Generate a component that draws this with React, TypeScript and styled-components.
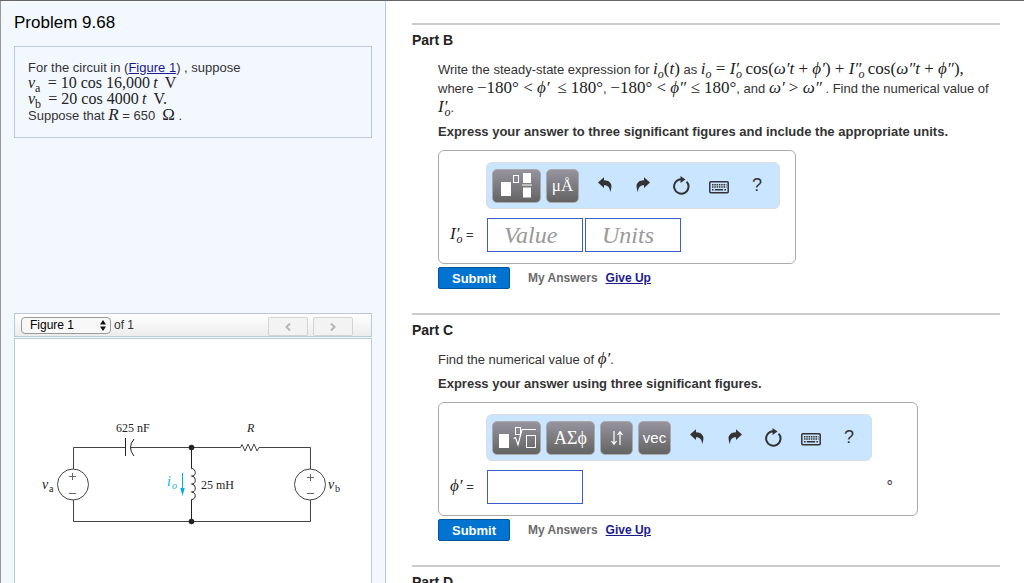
import React from "react";
import styled, { createGlobalStyle } from "styled-components";

const sans = '"Liberation Sans", Arial, sans-serif';
const serif = '"Liberation Serif", "DejaVu Serif", serif';

const GlobalStyle = createGlobalStyle`
  * { box-sizing: border-box; }
  body { margin: 0; background: #fff; color: #333; font: 13px/16px ${sans}; }
  button, input, select { font-family: inherit; margin: 0; }
`;

const Page = styled.div`
  display: flex;
  height: 100vh;
  border-top: 1px solid #666;
`;

const ProblemPane = styled.aside`
  flex: 0 0 386px;
  display: flex;
  flex-direction: column;
  padding: 12px 13px 0;
  background: #f3f8ff;
  border-left: 1px solid #999;
  border-right: 1px solid #b7cbdc;
  overflow: hidden;
`;

const ProblemTitle = styled.h1`
  margin: 0;
  color: #000;
  font-size: 17px;
  font-weight: normal;
  line-height: 20px;
`;

const ProblemText = styled.div`
  margin-top: 13px;
  padding: 13px;
  border: 1px solid #b7cbdc;
`;

const TextLine = styled.p`
  margin: 0;
  height: 16px;
  white-space: nowrap;
`;

const Link = styled.a`
  color: #1a1a8f;
  text-decoration: underline;
`;

const FigureBar = styled.div`
  display: flex;
  align-items: center;
  flex: none;
  height: 24px;
  margin-top: 175px;
  padding: 0 18px 0 6px;
  border: 1px solid #b7cbdc;
  background: linear-gradient(#fff, #ececec);
  color: #333;
  font-size: 12px;
`;

const SelectWrap = styled.label`
  display: flex;
  align-items: center;
  position: relative;
  margin-right: 3px;

  svg { position: absolute; right: 5px; pointer-events: none; }
`;

const FigureSelect = styled.select`
  appearance: none;
  width: 90px;
  height: 17px;
  padding: 0 8px;
  border: 1px solid #999;
  border-radius: 4px;
  background: #f8f8f8;
  color: #000;
  font-size: 12px;
  line-height: 14px;
`;

const Pager = styled.div`
  display: flex;
  gap: 5px;
  margin-left: auto;
  align-self: flex-end;
`;

const PagerButton = styled.button`
  display: flex;
  align-items: center;
  justify-content: center;
  width: 40px;
  height: 19px;
  padding: 0;
  border: 1px solid #d4d4d4;
  border-radius: 2px;
  background: #f3f3f3;
`;

const FigureFrame = styled.div`
  flex: 1;
  margin-top: 1px;
  border: 1px solid #b7cbdc;
  border-bottom: 0;
  background: #fff;
  overflow: hidden;

  svg { display: block; }
`;

const AnswerPane = styled.main`
  flex: 1;
  min-width: 0;
  padding: 22px 24px 0 26px;
  overflow: hidden;
`;

const PartSection = styled.section`
  padding-bottom: 24px;
  border-top: 2px solid #ccc;
`;

const PartTitle = styled.h2`
  margin: 0;
  padding-top: 7px;
  color: #222;
  font-size: 14px;
  line-height: 16px;
`;

const PartBody = styled.div`
  padding: 12px 0 0 26px;
`;

const Statement = styled.p`
  margin: 0;
  line-height: 19px;
  white-space: nowrap;
`;

const Instruction = styled.p`
  margin: 7px 0 10px;
  font-weight: bold;
`;

const Formula = styled.span<{ $upright?: boolean; $small?: boolean }>`
  color: #222;
  font-family: ${serif};
  font-size: ${(p) => (p.$small ? 16 : 17)}px;
  font-style: ${(p) => (p.$upright ? "normal" : "italic")};
  line-height: 0;
  white-space: pre;
`;

const Sub = styled.sub<{ $tuck?: boolean }>`
  margin-left: ${(p) => (p.$tuck ? "-3px" : "0")};
  font-size: 12px;
  line-height: 0;
  vertical-align: -4px;
`;

const Upright = styled.span`
  font-style: normal;
`;

const AnswerBox = styled.div<{ $width: number }>`
  width: ${(p) => p.$width}px;
  height: 114px;
  padding: 11px 15px 0 11px;
  border: 1px solid #aaa;
  border-radius: 6px;
`;

const Toolbar = styled.div`
  display: flex;
  align-items: center;
  gap: 5px;
  width: fit-content;
  height: 47px;
  margin-left: 36px;
  padding: 0 3px 0 5px;
  border: 1px solid #ddd;
  border-radius: 6px;
  background: #cae5ff;
`;

const PaletteButton = styled.button<{ $wide?: boolean; $serif?: boolean; $size?: number }>`
  display: flex;
  align-items: center;
  justify-content: center;
  width: ${(p) => (p.$wide ? 49 : 33)}px;
  height: 34px;
  padding: 0;
  border: 1px solid #aaa;
  border-radius: 5px;
  background: linear-gradient(#96939e, #636363);
  color: #fff;
  font-size: ${(p) => p.$size ?? 15}px;
  line-height: 20px;

  && { font-family: ${(p) => (p.$serif ? serif : sans)}; }
`;

const ToolIcons = styled.div`
  display: flex;
  padding-left: 2px;
`;

const IconButton = styled.button`
  display: flex;
  align-items: center;
  justify-content: center;
  width: 38px;
  height: 34px;
  padding: 0;
  border: 0;
  background: none;
  color: #333;
  font-size: 18px;
`;

const EntryRow = styled.div`
  display: flex;
  align-items: center;
  gap: 2px;
  margin-top: 9px;
`;

const EntryLabel = styled.label`
  width: 35px;
  white-space: nowrap;
`;

const Entry = styled.input`
  width: 96px;
  height: 34px;
  padding: 0 16px;
  border: 1px solid #3a5fcd;
  border-radius: 0;
  background: #fff;
  font-size: 24px;

  && { font-family: ${serif}; }
  &::placeholder { color: #999; font-style: italic; opacity: 1; }
`;

const Degree = styled.span`
  margin-left: auto;
  padding-right: 9px;
  font-size: 16px;
`;

const Actions = styled.div`
  display: flex;
  align-items: center;
  margin-top: 3px;
  font-size: 12px;
  font-weight: bold;
`;

const SubmitButton = styled.button`
  width: 72px;
  height: 22px;
  margin-right: 18px;
  padding: 0;
  border: 1px solid #00549b;
  border-radius: 2px;
  background: #0074d0;
  color: #fff;
  font-size: 13px;
  font-weight: bold;
`;

const MyAnswers = styled.span`
  margin-right: 8px;
  color: #6b6b6b;
`;

const UndoIcon = ({ flip = false }: { flip?: boolean }) => (
  <svg width="14" height="17" viewBox="0 0 14 17" aria-hidden="true">
    <path
      transform={flip ? "translate(14 0) scale(-1 1)" : undefined}
      d="M0 5.6 L6 .2 V3.2 C11 3.2 13.8 6 13.4 10 C13.1 12.500 12.600 14 12 15 C12 11 10 8.300 6 8.300 V11 Z"
      fill="#333"
    />
  </svg>
);

const ResetIcon = () => (
  <svg width="18" height="20" viewBox="0 0 18 20" aria-hidden="true">
    <path d="M14.600 5.600 A7.200 7.200 0 1 1 9 3.300" fill="none" stroke="#333" strokeWidth="2" />
    <path d="M8.500 0 L13.500 3.400 L8.500 7 Z" fill="#333" />
  </svg>
);

const KeyboardIcon = () => (
  <svg width="20" height="16" viewBox="0 0 20 16" aria-hidden="true">
    <rect x=".8" y="3.8" width="18.400" height="10.900" rx="1" fill="none" stroke="#333" strokeWidth="1.5" />
    <path d="M3 6.700 H17.500 M3 9 H17.500" stroke="#333" strokeWidth="1.5" strokeDasharray="1.5 .8" />
    <path d="M3 11.800 H4.600 M5.800 11.800 H14.200 M15.400 11.800 H17" stroke="#333" strokeWidth="1.4" />
  </svg>
);

const TemplateIcon = () => (
  <svg width="32" height="28" viewBox="0 0 32 28" aria-hidden="true">
    <rect x="0" y="10" width="10" height="14" fill="#fff" />
    <rect x="12.500" y="3.500" width="5" height="7" fill="none" stroke="#fff" />
    <rect x="22" y="1" width="8" height="10" fill="#fff" />
    <rect x="21" y="12.500" width="10" height="1" fill="#fff" />
    <rect x="22" y="15.500" width="8" height="10" fill="#fff" />
  </svg>
);

const RootIcon = () => (
  <svg width="38" height="26" viewBox="0 0 38 26" aria-hidden="true">
    <rect x="1" y="9" width="10" height="14" fill="#fff" />
    <rect x="17.500" y="2.500" width="5" height="7" fill="none" stroke="#fff" />
    <path d="M15.500 13.500 L17.500 12.500 L20 20 L24 4.500 H38" fill="none" stroke="#fff" strokeWidth="1.2" />
    <rect x="28.500" y="10.500" width="9" height="12" fill="none" stroke="#fff" />
  </svg>
);

const ArrowsIcon = () => (
  <svg width="14" height="18" viewBox="0 0 14 18" aria-hidden="true">
    <path d="M4 2 V15 M1.500 12 L4 15.200 L6.500 12 M10 16 V3 M7.500 6 L10 2.800 L12.500 6" fill="none" stroke="#fff" strokeWidth="1.2" />
  </svg>
);

const ToolbarActions = () => (
  <ToolIcons>
    <IconButton aria-label="Undo"><UndoIcon /></IconButton>
    <IconButton aria-label="Redo"><UndoIcon flip /></IconButton>
    <IconButton aria-label="Reset"><ResetIcon /></IconButton>
    <IconButton aria-label="Keyboard"><KeyboardIcon /></IconButton>
    <IconButton aria-label="Help">?</IconButton>
  </ToolIcons>
);

const SubmitRow = () => (
  <Actions>
    <SubmitButton>Submit</SubmitButton>
    <MyAnswers>My Answers</MyAnswers>
    <Link href="#give-up">Give Up</Link>
  </Actions>
);

const Circuit = () => (
  <svg width="356" height="244" viewBox="15 339 356 244" role="img" aria-label="Circuit diagram">
    <g fill="none" stroke="#444" strokeWidth="1">
      <path d="M73.500 469 V447.500 H125.500 M130.500 447.500 H240.500 L242 444.500 L245 451 L248 444 L251 451 L254 444 L257 451 L259 447.500 H310.500 V469 M310.500 500 V521.500 H73.500 V500" />
      <path d="M125.500 438 V456 M134 439 Q127 447.500 134 456" stroke="#222" />
      <path d="M191.500 447.500 V468.500 C196.500 468.500 196.500 477 191.500 476 C196.500 476 196.500 485 191.500 484 C196.500 484 196.500 493 191.500 492 C196.500 492 196.500 499.500 191.500 499.500 V521.500" stroke="#222" />
      <circle cx="73" cy="484.500" r="15.500" />
      <circle cx="310" cy="484.500" r="15.500" />
      <path d="M69 476.500 H76 M72.500 473 V480 M69 493.500 H76 M307 477.500 H314 M310.500 474 V481 M307 493.500 H314" stroke="#666" />
    </g>
    <circle cx="191.500" cy="447.500" r="2.800" fill="#222" />
    <circle cx="191.500" cy="521.500" r="2.800" fill="#222" />
    <path d="M182.500 473 V489" stroke="#00aeef" />
    <path d="M180.300 488 H184.700 L182.500 496 Z" fill="#00aeef" />
    <g fill="#222" fontFamily={serif} fontSize="12">
      <text x="116" y="432">625 nF</text>
      <text x="247" y="432" fontStyle="italic">R</text>
      <text x="201" y="489">25 mH</text>
      <text x="42" y="489" fontSize="14" fontStyle="italic">v</text>
      <text x="49" y="492" fontSize="10">a</text>
      <text x="328" y="489" fontSize="14" fontStyle="italic">v</text>
      <text x="335" y="492" fontSize="10">b</text>
      <g fill="#00aeef" fontStyle="italic">
        <text x="167" y="486" fontSize="14">i</text>
        <text x="172" y="489" fontSize="10">o</text>
      </g>
    </g>
  </svg>
);

export default function App() {
  return (
    <>
      <GlobalStyle />
      <Page>
        <ProblemPane>
          <ProblemTitle>Problem 9.68</ProblemTitle>
          <ProblemText>
            <TextLine>For the circuit in (<Link href="#figure">Figure 1</Link>) , suppose</TextLine>
            <TextLine><Formula $small>v<Sub><Upright>a</Upright></Sub><Upright>{"\u2009 = 10 cos 16,000\u2009"}</Upright>t<Upright>{" \u2009V"}</Upright></Formula></TextLine>
            <TextLine><Formula $small>v<Sub><Upright>b</Upright></Sub><Upright>{"\u2009 = 20 cos 4000\u2009"}</Upright>t<Upright>{" \u2009V."}</Upright></Formula></TextLine>
            <TextLine>Suppose that <Formula>R</Formula> = 650 &nbsp;<Formula $upright>Ω</Formula> .</TextLine>
          </ProblemText>
          <FigureBar>
            <SelectWrap>
              <FigureSelect aria-label="Figure"><option>Figure 1</option></FigureSelect>
              <svg width="6" height="11" viewBox="0 0 6 11"><path d="M3 0 L6 4.500 H0 Z M0 6.500 H6 L3 11 Z" fill="#111" /></svg>
            </SelectWrap>
            of 1
            <Pager>
              <PagerButton aria-label="Previous figure">
                <svg width="6" height="8" viewBox="0 0 6 8"><path d="M5 .5 L1.500 4 L5 7.500" fill="none" stroke="#b5b5b5" strokeWidth="2" /></svg>
              </PagerButton>
              <PagerButton aria-label="Next figure">
                <svg width="6" height="8" viewBox="0 0 6 8"><path d="M1 .5 L4.500 4 L1 7.500" fill="none" stroke="#b5b5b5" strokeWidth="2" /></svg>
              </PagerButton>
            </Pager>
          </FigureBar>
          <FigureFrame id="figure"><Circuit /></FigureFrame>
        </ProblemPane>

        <AnswerPane>
          <PartSection>
            <PartTitle>Part B</PartTitle>
            <PartBody>
              <Statement>
                Write the steady-state expression for <Formula>i<Sub>o</Sub><Upright>(</Upright>t<Upright>)</Upright></Formula> as <Formula>i<Sub>o</Sub><Upright> = </Upright>I′<Sub $tuck>o</Sub><Upright>{"\u2009cos("}</Upright>ω′t<Upright> + </Upright>ϕ′<Upright>) + </Upright>I″<Sub $tuck>o</Sub><Upright>{"\u2009cos("}</Upright>ω″t<Upright> + </Upright>ϕ″<Upright>),</Upright></Formula>
                <br />
                where <Formula><Upright>{"−180° < "}</Upright>ϕ′<Upright>{"\u2009 ≤ 180°"}</Upright></Formula>, <Formula><Upright>{"−180° < "}</Upright>ϕ″<Upright> ≤ 180°</Upright></Formula>, and <Formula>ω′<Upright> &gt; </Upright>ω″</Formula> . Find the numerical value of
                <br />
                <Formula>I′<Sub $tuck>o</Sub></Formula>.
              </Statement>
              <Instruction>Express your answer to three significant figures and include the appropriate units.</Instruction>
              <AnswerBox $width={358}>
                <Toolbar>
                  <PaletteButton $wide aria-label="Templates"><TemplateIcon /></PaletteButton>
                  <PaletteButton $serif $size={17}>μÅ</PaletteButton>
                  <ToolbarActions />
                </Toolbar>
                <EntryRow>
                  <EntryLabel htmlFor="value"><Formula>I′<Sub $tuck>o</Sub></Formula> =</EntryLabel>
                  <Entry id="value" placeholder="Value" />
                  <Entry aria-label="Units" placeholder="Units" />
                </EntryRow>
              </AnswerBox>
              <SubmitRow />
            </PartBody>
          </PartSection>

          <PartSection>
            <PartTitle>Part C</PartTitle>
            <PartBody>
              <Statement>Find the numerical value of <Formula>ϕ′</Formula>.</Statement>
              <Instruction>Express your answer using three significant figures.</Instruction>
              <AnswerBox $width={480}>
                <Toolbar>
                  <PaletteButton $wide aria-label="Roots"><RootIcon /></PaletteButton>
                  <PaletteButton $wide $serif $size={18}>ΑΣϕ</PaletteButton>
                  <PaletteButton aria-label="Arrows"><ArrowsIcon /></PaletteButton>
                  <PaletteButton>vec</PaletteButton>
                  <ToolbarActions />
                </Toolbar>
                <EntryRow>
                  <EntryLabel htmlFor="phase"><Formula>ϕ′</Formula> =</EntryLabel>
                  <Entry id="phase" />
                  <Degree>°</Degree>
                </EntryRow>
              </AnswerBox>
              <SubmitRow />
            </PartBody>
          </PartSection>

          <PartSection>
            <PartTitle>Part D</PartTitle>
          </PartSection>
        </AnswerPane>
      </Page>
    </>
  );
}
